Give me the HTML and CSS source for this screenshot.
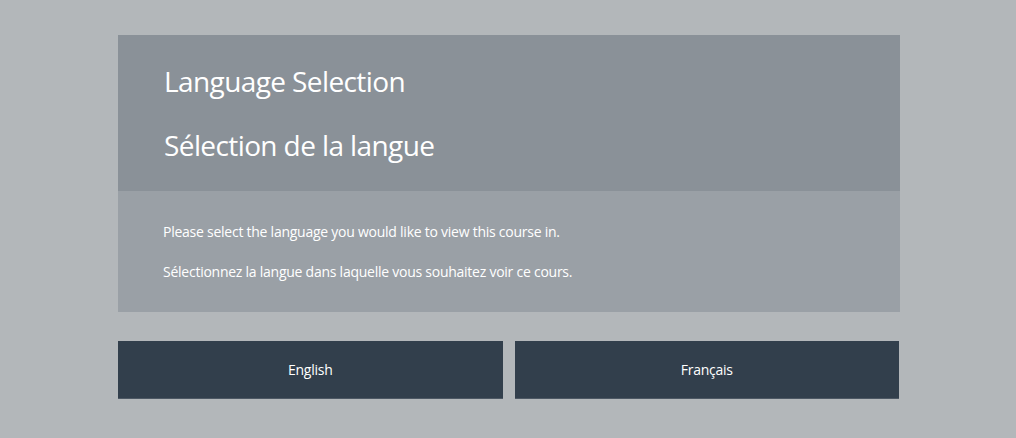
FILE: index.html
```html
<!DOCTYPE html>
<html lang="en">
<head>
<meta charset="utf-8">
<title>Language Selection</title>
<link rel="stylesheet" href="styles.css">
</head>
<body>
<main class="wrap">
  <section class="panel">
    <header class="panel-head">
      <h1 class="title">Language Selection</h1>
      <h1 class="title">Sélection de la langue</h1>
    </header>
    <div class="panel-body">
      <p class="text">Please select the language you would like to view this course in.</p>
      <p class="text">Sélectionnez la langue dans laquelle vous souhaitez voir ce cours.</p>
    </div>
  </section>
  <div class="buttons">
    <button class="btn" type="button">English</button>
    <button class="btn" type="button">Français</button>
  </div>
</main>
</body>
</html>
```
FILE: styles.css
```css
html, body {
  margin: 0;
  padding: 0;
}
body {
  background: #b3b7ba;
  font-family: "Open Sans", "Noto Sans", sans-serif;
  color: #ffffff;
  height: 438px;
  overflow: hidden;
}
.wrap {
  width: 782px;
  margin: 35px 0 0 118px;
}
.panel-head {
  background: #8a9198;
  padding: 30px 46px 30px;
}
.title {
  margin: 0;
  font-size: 28px;
  line-height: 32px;
  font-weight: 400;
  letter-spacing: -0.6px;
}
.title + .title {
  margin-top: 32px;
}
.panel-body {
  background: #9aa0a6;
  padding: 31px 45px 30px;
}
.text {
  margin: 0;
  font-size: 14px;
  line-height: 20px;
  letter-spacing: -0.25px;
}
.text + .text {
  margin-top: 20px;
}
.buttons {
  display: grid;
  grid-template-columns: 1fr 1fr;
  column-gap: 12px;
  margin: 29px 1px 0 0;
}
.btn {
  height: 58px;
  border: 0;
  border-bottom: 1px solid #4d5864;
  background: #323f4c;
  color: #ffffff;
  font-family: "Open Sans", "Noto Sans", sans-serif;
  font-size: 14px;
  letter-spacing: -0.25px;
  padding: 0;
  cursor: pointer;
}
```
